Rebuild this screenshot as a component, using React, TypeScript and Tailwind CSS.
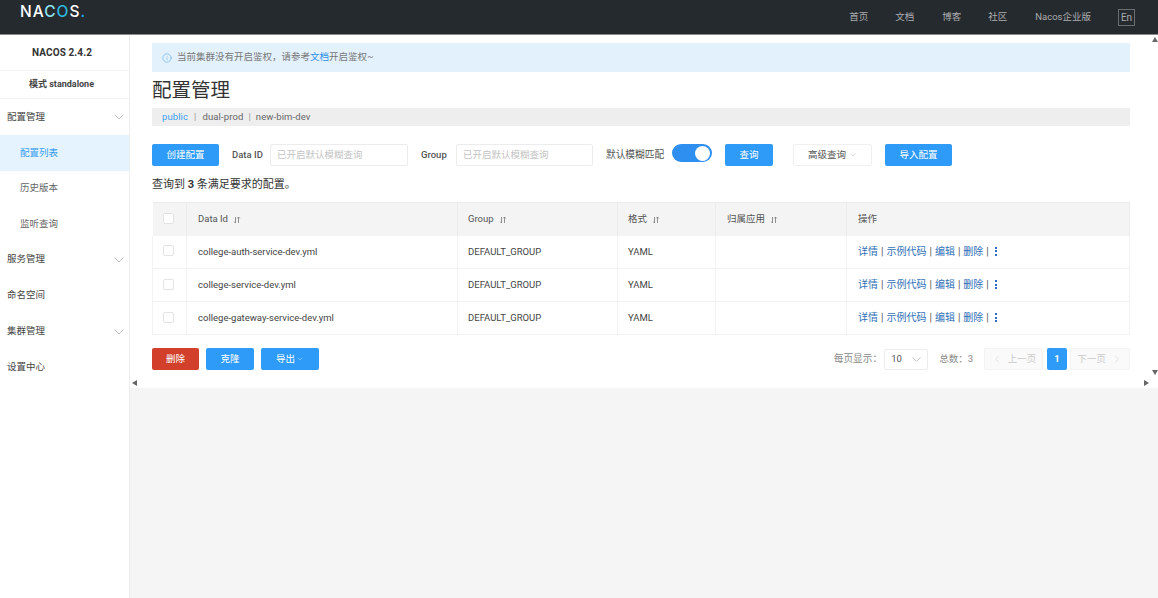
import { ChevronDown, ChevronLeft, ChevronRight, Info } from "lucide-react";

const FONT = "font-['Roboto','Noto_Sans_CJK_SC',sans-serif]";

function SortIcon() {
  return (
    <svg width="8" height="8" viewBox="0 0 8 8" className="ml-[5px] mt-[1px] shrink-0 text-[#777]" fill="none" stroke="currentColor" strokeWidth="0.8">
      <path d="M2.5 1v6M1.2 5.6 2.5 7" />
      <path d="M5.5 7V1M4.2 2.4 5.5 1 6.8 2.4" />
    </svg>
  );
}

function Check() {
  return <span className="block w-[11px] h-[11px] -mt-[2px] rounded-[2px] border border-[#e3e3e3] bg-white" />;
}

function Btn({ children, cls }: { children: React.ReactNode; cls: string }) {
  return <span className={"flex items-center justify-center h-[22px] rounded-[2px] text-white text-[9.5px] " + cls}>{children}</span>;
}

function NavItem({ label, caret }: { label: string; caret?: boolean }) {
  return (
    <div className="flex items-center justify-between h-[36px] pl-[7px] pr-[2px] text-[9.5px] text-[#444]">
      <span>{label}</span>
      {caret && <ChevronDown size={16} strokeWidth={0.8} className="text-[#888]" />}
    </div>
  );
}

function SubItem({ label, active }: { label: string; active?: boolean }) {
  return (
    <div className={"flex items-center h-[35.5px] pl-[20px] text-[9.5px] " + (active ? "bg-[#e4f3fe] text-[#3b9ff0]" : "text-[#666]")}>
      {label}
    </div>
  );
}

const rows = ["college-auth-service-dev.yml", "college-service-dev.yml", "college-gateway-service-dev.yml"];

function Row({ name }: { name: string }) {
  const sep = <span className="mx-[3px] text-[#555]">|</span>;
  return (
    <tr className="h-[33px] text-[9.5px] text-[#444]">
      <td className="border-b border-r border-l border-[#f2f2f2] pl-[10px]"><Check /></td>
      <td className="border-b border-r border-[#f2f2f2] pl-[11px]">{name}</td>
      <td className="border-b border-r border-[#f2f2f2] pl-[10px]">DEFAULT_GROUP</td>
      <td className="border-b border-r border-[#f2f2f2] pl-[10px]">YAML</td>
      <td className="border-b border-r border-[#f2f2f2]"></td>
      <td className="border-b border-r border-[#f2f2f2] pl-[11px]">
        <div className="flex items-center text-[10px] text-[#2f6fb8] -mt-[1px]">
          <span>详情</span>{sep}<span>示例代码</span>{sep}<span>编辑</span>{sep}<span>删除</span>{sep}
          <span className="ml-[3px] flex flex-col gap-[1.5px]">
            <i className="block w-[2px] h-[2px] bg-[#2a6bc0]" />
            <i className="block w-[2px] h-[2px] bg-[#2a6bc0]" />
            <i className="block w-[2px] h-[2px] bg-[#2a6bc0]" />
          </span>
        </div>
      </td>
    </tr>
  );
}

function Th({ label, sort, cls }: { label: string; sort?: boolean; cls: string }) {
  return (
    <th className={"border-r border-[#ececec] font-normal text-left " + cls}>
      <div className="flex items-center">
        <span>{label}</span>
        {sort && <SortIcon />}
      </div>
    </th>
  );
}

export default function App() {
  return (
    <div className={"h-[598px] w-[1158px] flex flex-col overflow-hidden bg-white " + FONT}>
      <header className="h-[35px] shrink-0 bg-[#252a2f] border-b border-[#8a8d90] flex items-center justify-between pl-[20px] pr-[23px]">
        <div className="font-['Inter',sans-serif] text-[15.5px] leading-none font-medium tracking-[1px] -mt-[11px] text-white">
          NA<span className="text-[#8fe4f2]">C</span><span className="text-[#2bb7de]">O</span>S<span className="text-[#2aa3e8]">.</span>
        </div>
        <nav className="flex items-center text-[9.5px] text-[#aaacae]">
          <span>首页</span>
          <span className="ml-[27px]">文档</span>
          <span className="ml-[28px]">博客</span>
          <span className="ml-[27px]">社区</span>
          <span className="ml-[28px]">Nacos企业版</span>
          <span className="ml-[27px] flex items-center justify-center w-[17px] h-[17px] border border-[#6b6e71] text-[10px]">En</span>
        </nav>
      </header>
      <div className="flex-1 flex min-h-0">
        <aside className="w-[130px] shrink-0 border-r border-[#ececec] bg-white">
          <div className="h-[36px] pr-[5px] flex items-center justify-center text-[10px] tracking-[0.1px] font-bold text-[#333] border-b border-[#f3f3f3]">NACOS 2.4.2</div>
          <div className="h-[28px] pr-[6px] flex items-center justify-center text-[9px] font-bold text-[#444] border-b border-[#f3f3f3]">模式 standalone</div>
          <NavItem label="配置管理" caret />
          <SubItem label="配置列表" active />
          <SubItem label="历史版本" />
          <SubItem label="监听查询" />
          <NavItem label="服务管理" caret />
          <NavItem label="命名空间" />
          <NavItem label="集群管理" caret />
          <NavItem label="设置中心" />
        </aside>
        <main className="flex-1 flex flex-col min-w-0 bg-[#f5f5f5]">
          <section className="relative h-[353px] shrink-0 bg-white pl-[22px] pr-[28px] pt-[8px]">
            <div className="h-[29px] bg-[#e3f1fd] flex items-center pl-[10px] text-[9.5px] text-[#777]">
              <Info size={10} strokeWidth={1.3} className="text-[#4aa3ee] mr-[5px]" />
              <span>当前集群没有开启鉴权，请参考<span className="text-[#2e8fe6]">文档</span>开启鉴权~</span>
            </div>
            <h1 className="h-[36px] pt-[2px] flex items-center text-[19.5px] font-normal text-[#333]">配置管理</h1>
            <div className="h-[18px] bg-[#eeeeee] flex items-center pl-[10px] text-[9.5px] tracking-[0.1px] text-[#666]">
              <span className="text-[#3b9ff0]">public</span>
              <span className="mx-[6px] text-[#999]">|</span>
              <span>dual-prod</span>
              <span className="mx-[5px] text-[#999]">|</span>
              <span>new-bim-dev</span>
            </div>
            <div className="flex items-center h-[22px] mt-[18px] text-[9.5px]">
              <Btn cls="w-[67px] bg-[#2e9bf9]">创建配置</Btn>
              <span className="ml-[13px] w-[30px] font-medium text-[#555] whitespace-nowrap">Data ID</span>
              <span className="ml-[8px] w-[138px] h-[22px] border border-[#ececec] rounded-[2px] flex items-center pl-[6px] text-[#c4c4c4]">已开启默认模糊查询</span>
              <span className="ml-[13px] w-[27px] font-medium text-[#555]">Group</span>
              <span className="ml-[8px] w-[137px] h-[22px] border border-[#ececec] rounded-[2px] flex items-center pl-[6px] text-[#c4c4c4]">已开启默认模糊查询</span>
              <span className="ml-[13px] w-[58px] text-[#555] whitespace-nowrap text-[9.7px]">默认模糊匹配</span>
              <span className="ml-[8px] w-[40px] h-[18px] -mt-[4px] rounded-full bg-[#2e8ff0] relative">
                <span className="absolute right-[2px] top-[1.5px] w-[15px] h-[15px] rounded-full bg-white" />
              </span>
              <Btn cls="ml-[13px] w-[48px] bg-[#2e9bf9]">查询</Btn>
              <span className="ml-[20px] w-[79px] h-[22px] border border-[#efefef] rounded-[2px] flex items-center justify-center text-[#555]">
                高级查询<ChevronDown size={8} strokeWidth={1} className="ml-[3px] text-[#999]" />
              </span>
              <Btn cls="ml-[13px] w-[67px] bg-[#2e9bf9]">导入配置</Btn>
            </div>
            <p className="h-[36px] pt-[3px] flex items-center text-[11px] text-[#333]">查询到&nbsp;<b className="font-bold">3</b>&nbsp;条满足要求的配置。</p>
            <table className="w-[977px] table-fixed border-collapse">
              <colgroup>
                <col className="w-[34px]" />
                <col className="w-[271px]" />
                <col className="w-[160px]" />
                <col className="w-[98px]" />
                <col className="w-[131px]" />
                <col className="w-[283px]" />
              </colgroup>
              <thead>
                <tr className="h-[33px] bg-[#f4f4f4] text-[9.5px] text-[#555] border-t border-[#ececec]">
                  <th className="border-r border-[#ececec] pl-[10px]"><Check /></th>
                  <Th cls="pl-[11px]" label="Data Id" sort />
                  <Th cls="pl-[10px]" label="Group" sort />
                  <Th cls="pl-[10px]" label="格式" sort />
                  <Th cls="pl-[11px]" label="归属应用" sort />
                  <Th cls="pl-[11px]" label="操作" />
                </tr>
              </thead>
              <tbody>
                {rows.map((r) => <Row key={r} name={r} />)}
              </tbody>
            </table>
            <div className="flex items-center justify-between h-[22px] mt-[13px] text-[9.5px]">
              <div className="flex items-center gap-[7px]">
                <Btn cls="w-[47px] bg-[#d2402b]">删除</Btn>
                <Btn cls="w-[48px] bg-[#2e9bf9]">克隆</Btn>
                <Btn cls="w-[58px] bg-[#2e9bf9]">导出<ChevronDown size={8} strokeWidth={1} className="ml-[1px]" /></Btn>
              </div>
              <div className="flex items-center text-[#888]">
                <span className="text-[9.7px]">每页显示：</span>
                <span className="ml-[2px] w-[44px] h-[21px] border border-[#ececec] rounded-[2px] flex items-center justify-between pl-[6px] pr-[3px] text-[#555]">
                  10<ChevronDown size={15} strokeWidth={0.8} className="text-[#888]" />
                </span>
                <span className="ml-[11px]">总数：3</span>
                <span className="ml-[11px] w-[59px] h-[22px] bg-[#fafafa] border border-[#f3f3f3] rounded-[2px] flex items-center justify-center text-[#cacaca]">
                  <ChevronLeft size={12} strokeWidth={1} className="mr-[5px]" />上一页
                </span>
                <span className="ml-[4px] w-[20px] h-[22px] bg-[#2e9bf9] rounded-[2px] flex items-center justify-center text-white font-bold">1</span>
                <span className="ml-[3px] w-[60px] h-[22px] bg-[#fafafa] border border-[#f3f3f3] rounded-[2px] flex items-center justify-center text-[#cacaca]">
                  下一页<ChevronRight size={12} strokeWidth={1} className="ml-[5px]" />
                </span>
              </div>
            </div>
            <span className="absolute left-[2px] top-[345px] w-0 h-0 border-y-[3.5px] border-y-transparent border-r-[5px] border-r-[#666]" />
            <span className="absolute left-[1014px] top-[345px] w-0 h-0 border-y-[3.5px] border-y-transparent border-l-[5px] border-l-[#666]" />
            <span className="absolute left-[1022px] top-[335px] w-0 h-0 border-x-[3.5px] border-x-transparent border-t-[5px] border-t-[#666]" />
            <span className="absolute left-[1022px] top-[2px] w-0 h-0 border-x-[3.5px] border-x-transparent border-b-[5px] border-b-[#666]" />
          </section>
        </main>
      </div>
    </div>
  );
}
